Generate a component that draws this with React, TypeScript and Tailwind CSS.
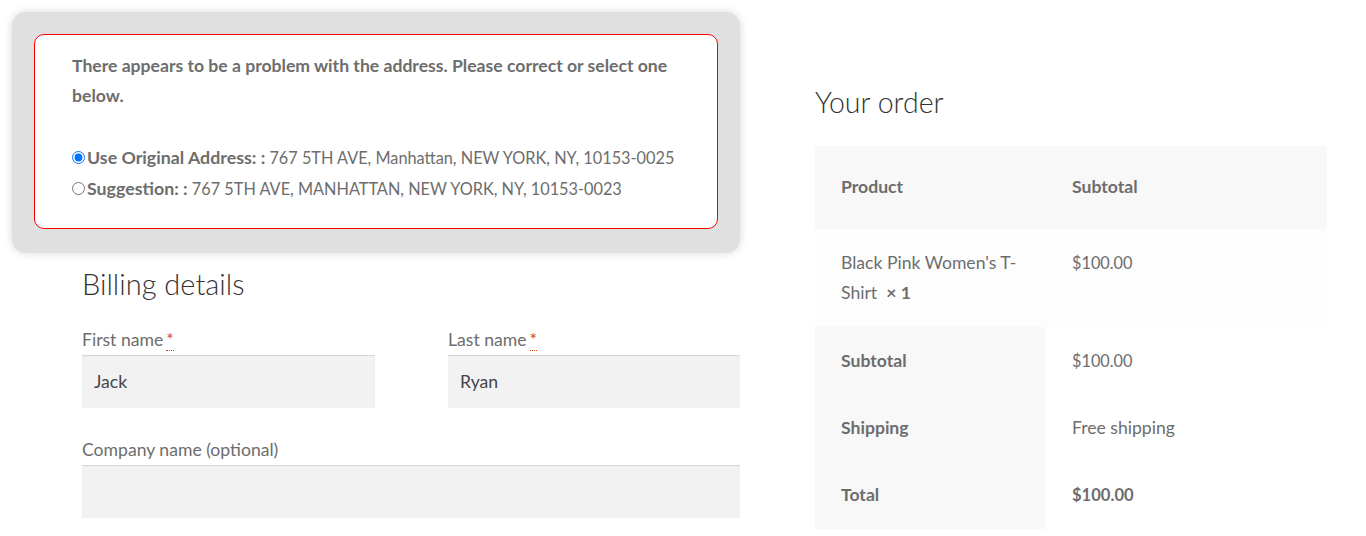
import React from "react";

const Field: React.FC<{ label: string; value?: string; required?: boolean }> = ({
  label,
  value,
  required,
}) => (
  <div>
    <label className="block text-[17.6px] leading-[26px] text-[#6d6d6d]">
      {label}
      {required && (
        <abbr className="ml-[3px] text-[#e2401c] no-underline border-b border-dotted border-[#e2401c]">
          *
        </abbr>
      )}
    </label>
    <input
      type="text"
      defaultValue={value}
      className="mt-[2px] block h-[53px] w-full bg-[#f2f2f2] px-[12px] text-[17.6px] text-[#43454b] shadow-[inset_0_1px_1px_rgba(0,0,0,0.125)] outline-none"
    />
  </div>
);

export default function App() {
  return (
    <div className="flex h-[536px] w-[1366px] overflow-hidden bg-white font-['Lato',sans-serif] text-[#6d6d6d]">
      <div className="ml-[12px] mt-[12px] w-[728px] shrink-0">
        <div className="h-[241px] rounded-[14px] bg-[#e0e0e0] p-[22px] shadow-[0_0_10px_rgba(0,0,0,0.15)]">
          <div className="h-[195px] rounded-[10px] border border-[#f00] bg-white pl-[37px] pr-[30px] pt-[16px]">
            <p className="text-[17.6px] font-bold leading-[30px]">
              There appears to be a problem with the address. Please correct or select one below.
            </p>
            <div className="mt-[31px] leading-[30px]">
              <label className="flex items-center">
                <input type="radio" name="addr" defaultChecked className="m-0 h-[13px] w-[13px]" />
                <span className="ml-[2px] whitespace-nowrap">
                  <b className="text-[17.8px]">Use Original Address: :</b>
                  <span className="text-[16.3px]"> 767 5TH AVE, Manhattan, NEW YORK, NY, 10153-0025</span>
                </span>
              </label>
              <label className="flex items-center">
                <input type="radio" name="addr" className="m-0 h-[13px] w-[13px]" />
                <span className="ml-[2px] whitespace-nowrap">
                  <b className="text-[17.8px]">Suggestion: :</b>
                  <span className="text-[16.3px]"> 767 5TH AVE, MANHATTAN, NEW YORK, NY, 10153-0023</span>
                </span>
              </label>
            </div>
          </div>
        </div>

        <div className="pl-[70px]">
          <h3 className="mt-[13px] text-[29px] font-light leading-[36px] text-[#333333]">
            Billing details
          </h3>
          <div className="mt-[25px] grid grid-cols-[293px_292px] gap-x-[73px]">
            <Field label="First name" value="Jack" required />
            <Field label="Last name" value="Ryan" required />
          </div>
          <div className="mt-[29px]">
            <Field label="Company name (optional)" />
          </div>
        </div>
      </div>

      <div className="ml-[75px] w-[512px] shrink-0">
        <h3 className="mt-[84px] text-[28.5px] font-light leading-[36px] text-[#333333]">
          Your order
        </h3>
        <table className="mt-[26px] w-full border-collapse text-left text-[17.6px] leading-[30px]">
          <thead>
            <tr className="h-[83px] bg-[#f8f8f8]">
              <th className="w-[230px] px-[26px] pb-[2px] font-bold">Product</th>
              <th className="px-[27px] pb-[2px] font-bold">Subtotal</th>
            </tr>
          </thead>
          <tbody>
            <tr className="h-[98px] bg-[#fdfdfd] align-top">
              <td className="px-[26px] pt-[19px]">
                <span className="whitespace-nowrap">Black Pink Women's T-</span>
                <br />
                <span className="whitespace-nowrap">
                  Shirt&nbsp; <strong>×&nbsp;1</strong>
                </span>
              </td>
              <td className="px-[27px] pt-[19px] text-[16.3px]">$100.00</td>
            </tr>
          </tbody>
          <tfoot>
            <tr className="h-[67px]">
              <th className="bg-[#f8f8f8] px-[26px] font-bold">Subtotal</th>
              <td className="px-[27px] text-[16.3px]">$100.00</td>
            </tr>
            <tr className="h-[67px]">
              <th className="bg-[#f8f8f8] px-[26px] font-bold">Shipping</th>
              <td className="px-[27px]">Free shipping</td>
            </tr>
            <tr className="h-[68px]">
              <th className="bg-[#f8f8f8] px-[26px] font-bold">Total</th>
              <td className="px-[27px] text-[16.6px] font-bold">$100.00</td>
            </tr>
          </tfoot>
        </table>
      </div>
    </div>
  );
}
